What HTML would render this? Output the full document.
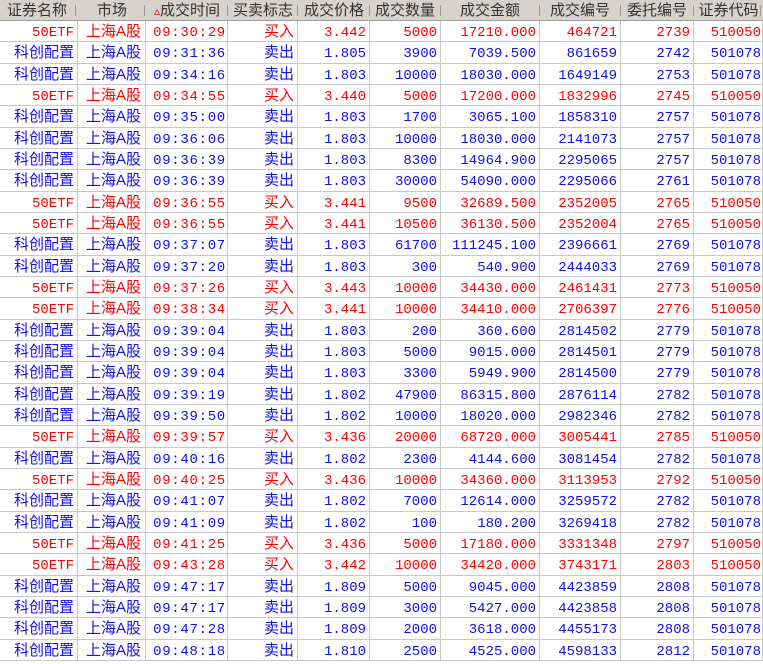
<!DOCTYPE html>
<html><head><meta charset="utf-8"><style>
body{margin:0;width:763px;height:659px;overflow:hidden;background:#fff;position:relative;font-family:"Liberation Mono","Noto Sans CJK SC",monospace;}
.hd{position:absolute;left:0;top:0;width:763px;height:20px;background:#d6d3ce;border-bottom:1px solid #a0a0a0;}
.hd span{position:absolute;top:0;height:20px;line-height:21px;font-family:"Liberation Sans","Noto Sans CJK SC",sans-serif;font-size:15px;color:#333;text-align:center}
.hd i{position:absolute;top:5px;width:1px;height:11px;background:#999}
.r{position:absolute;left:0;width:763px;height:21.33px;border-bottom:1px solid #c8c8c8;box-sizing:border-box;font-size:14px;line-height:24px}
.r div{position:absolute;top:0;height:21px;border-right:1px solid #c8c8c8;box-sizing:border-box;padding-right:3px;text-align:right;white-space:nowrap}
.c{font-family:"Liberation Sans","Noto Sans CJK SC",sans-serif;font-size:15px;line-height:22px}
.R{color:#f00}.B{color:#1010e8}
</style></head><body>
<div class="hd">
<span style="left:0;width:74px">证券名称</span><i style="left:75px"></i>
<span style="left:78px;width:68px">市场</span><i style="left:144px"></i>
<span style="left:146px;width:82px"><b style="color:#e00;font-weight:normal;font-size:12px">▵</b>成交时间</span><i style="left:227px"></i>
<span style="left:229px;width:68px">买卖标志</span><i style="left:297px"></i>
<span style="left:299px;width:70px">成交价格</span><i style="left:369px"></i>
<span style="left:369px;width:72px">成交数量</span><i style="left:440px"></i>
<span style="left:441px;width:98px">成交金额</span><i style="left:539px"></i>
<span style="left:540px;width:80px">成交编号</span><i style="left:620px"></i>
<span style="left:621px;width:72px">委托编号</span><i style="left:693px"></i>
<span style="left:694px;width:69px">证券代码</span><i style="left:760px"></i>
</div>
<div id="t"></div>
<script>
var d=[
["R","09:30:29","3.442","5000","17210.000","464721","2739"],
["B","09:31:36","1.805","3900","7039.500","861659","2742"],
["B","09:34:16","1.803","10000","18030.000","1649149","2753"],
["R","09:34:55","3.440","5000","17200.000","1832996","2745"],
["B","09:35:00","1.803","1700","3065.100","1858310","2757"],
["B","09:36:06","1.803","10000","18030.000","2141073","2757"],
["B","09:36:39","1.803","8300","14964.900","2295065","2757"],
["B","09:36:39","1.803","30000","54090.000","2295066","2761"],
["R","09:36:55","3.441","9500","32689.500","2352005","2765"],
["R","09:36:55","3.441","10500","36130.500","2352004","2765"],
["B","09:37:07","1.803","61700","111245.100","2396661","2769"],
["B","09:37:20","1.803","300","540.900","2444033","2769"],
["R","09:37:26","3.443","10000","34430.000","2461431","2773"],
["R","09:38:34","3.441","10000","34410.000","2706397","2776"],
["B","09:39:04","1.803","200","360.600","2814502","2779"],
["B","09:39:04","1.803","5000","9015.000","2814501","2779"],
["B","09:39:04","1.803","3300","5949.900","2814500","2779"],
["B","09:39:19","1.802","47900","86315.800","2876114","2782"],
["B","09:39:50","1.802","10000","18020.000","2982346","2782"],
["R","09:39:57","3.436","20000","68720.000","3005441","2785"],
["B","09:40:16","1.802","2300","4144.600","3081454","2782"],
["R","09:40:25","3.436","10000","34360.000","3113953","2792"],
["B","09:41:07","1.802","7000","12614.000","3259572","2782"],
["B","09:41:09","1.802","100","180.200","3269418","2782"],
["R","09:41:25","3.436","5000","17180.000","3331348","2797"],
["R","09:43:28","3.442","10000","34420.000","3743171","2803"],
["B","09:47:17","1.809","5000","9045.000","4423859","2808"],
["B","09:47:17","1.809","3000","5427.000","4423858","2808"],
["B","09:47:28","1.809","2000","3618.000","4455173","2808"],
["B","09:48:18","1.810","2500","4525.000","4598133","2812"]];
var h="";
d.forEach(function(r,i){var R=r[0]=="R";
h+='<div class="r '+r[0]+'" style="top:'+(21+i*21.33).toFixed(2)+'px">'+
'<div class="c" style="left:0;width:78px;'+(R?'font-family:Liberation Mono,monospace;font-size:14px;line-height:24px':'')+'">'+(R?'50ETF':'科创配置')+'</div>'+
'<div class="c" style="left:78px;width:68px;text-align:center;padding:0 0 0 4px">上海A股</div>'+
'<div style="left:146px;width:82px;text-align:center;letter-spacing:0.7px;padding:0 0 0 6px">'+r[1]+'</div>'+
'<div class="c" style="left:228px;width:70px">'+(R?'买入':'卖出')+'</div>'+
'<div style="left:298px;width:72px">'+r[2]+'</div>'+
'<div style="left:370px;width:71px">'+r[3]+'</div>'+
'<div style="left:441px;width:99px">'+r[4]+'</div>'+
'<div style="left:540px;width:81px">'+r[5]+'</div>'+
'<div style="left:621px;width:73px">'+r[6]+'</div>'+
'<div style="left:694px;width:69px;padding-right:1px">'+(R?'510050':'501078')+'</div></div>';});
document.getElementById("t").innerHTML=h;
</script>
</body></html>
